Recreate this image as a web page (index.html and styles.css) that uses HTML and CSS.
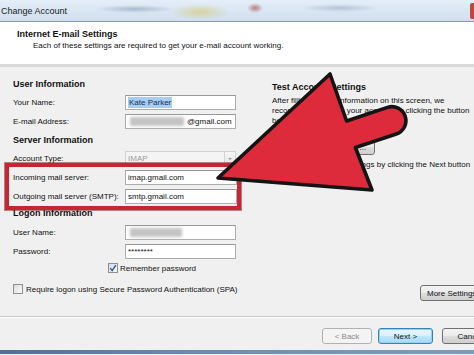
FILE: index.html
```html
<!DOCTYPE html>
<html lang="en">
<head>
	<meta charset="UTF-8">
	<title>Change Account</title>
	<link rel="stylesheet" href="styles.css">
</head>
<body>
	<div class="window">
		<div class="titlebar">
			<span class="title">Change Account</span>
			<span class="close"></span>
		</div>
		<div class="header">
			<div class="header-title">Internet E-mail Settings</div>
			<div class="header-sub">Each of these settings are required to get your e-mail account working.</div>
		</div>
		<div class="main">
			<div class="left">
				<div class="group-title">User Information</div>
				<div class="row">
					<span class="label">Your Name:</span>
					<span class="field"><span class="selected">Kate Parker</span></span>
				</div>
				<div class="row">
					<span class="label">E-mail Address:</span>
					<span class="field"><span class="smudge"></span><span class="after-smudge">@gmail.com</span></span>
				</div>
				<div class="group-title">Server Information</div>
				<div class="row row-account">
					<span class="label">Account Type:</span>
					<span class="field field-disabled">IMAP<span class="drop"></span></span>
				</div>
				<div class="highlight">
					<div class="row">
						<span class="label">Incoming mail server:</span>
						<span class="field">imap.gmail.com</span>
					</div>
					<div class="row">
						<span class="label">Outgoing mail server (SMTP):</span>
						<span class="field">smtp.gmail.com</span>
					</div>
				</div>
				<div class="group-title group-logon">Logon Information</div>
				<div class="row row-user">
					<span class="label">User Name:</span>
					<span class="field"><span class="smudge smudge-user"></span></span>
				</div>
				<div class="row">
					<span class="label">Password:</span>
					<span class="field">********</span>
				</div>
				<div class="check-row check-remember">
					<span class="check checked">
						<svg width="8" height="8" viewBox="0 0 8 8"><path d="M1.2 4.2 L3.2 6.6 L6.8 1.2" fill="none" stroke="#2a4f8f" stroke-width="1.3"/></svg>
					</span>
					<span>Remember password</span>
				</div>
				<div class="check-row check-spa">
					<span class="check"></span>
					<span>Require logon using Secure Password Authentication (SPA)</span>
				</div>
			</div>
			<div class="right">
				<div class="group-title group-test">Test Account Settings</div>
				<p class="info">After filling out the information on this screen, we<br>recommend you test your account by clicking the button<br>below. (Requires network connection)</p>
				<span class="btn btn-test">Test Account Settings ...</span>
				<div class="check-row check-next">
					<span class="check checked">
						<svg width="8" height="8" viewBox="0 0 8 8"><path d="M1.2 4.2 L3.2 6.6 L6.8 1.2" fill="none" stroke="#2a4f8f" stroke-width="1.3"/></svg>
					</span>
					<span>Test Account Settings by clicking the Next button</span>
				</div>
				<span class="btn btn-more">More Settings ...</span>
			</div>
		</div>
		<div class="footer">
			<span class="btn btn-disabled btn-back">&lt; Back</span>
			<span class="btn btn-default btn-next">Next &gt;</span>
			<span class="btn btn-cancel">Cancel</span>
		</div>
		<div class="taskbar"></div>
		<svg class="arrow" width="474" height="355" viewBox="0 0 474 355">
			<path d="M218 178 L330 74 L346.6 121 L387.5 107.4 A14 14 0 0 1 396.3 134 L355.4 147.5 L372 190 Z" fill="#de2b3b" stroke="#141414" stroke-width="3.6" stroke-linejoin="round"/>
		</svg>
	</div>
</body>
</html>
```

FILE: styles.css
```css
body{
	margin: 0;
	overflow: hidden;
}
.window{
	width: 474px;
	height: 355px;
	position: relative;
	overflow: hidden;
	background: #f0f0f0;
	font-family: "Liberation Sans", Arial, sans-serif;
	font-size: 8px;
	color: #111;
}
.titlebar{
	height: 21px;
	display: flex;
	align-items: center;
	justify-content: space-between;
	border-bottom: 1px solid #8c9aa8;
	background:
		radial-gradient(ellipse 30px 8px at 200px 12px, rgba(214,206,140,0.8), transparent),
		radial-gradient(ellipse 8px 5px at 255px 8px, rgba(170,80,70,0.7), transparent),
		radial-gradient(ellipse 40px 4px at 135px 9px, rgba(120,140,170,0.5), transparent),
		radial-gradient(ellipse 40px 4px at 340px 8px, rgba(120,140,170,0.4), transparent),
		linear-gradient(#e4eef8, #cfdeee);
}
.title{
	font-size: 9px;
	padding-left: 1px;
	color: #1a1a1a;
}
.close{
	width: 4px;
	height: 16px;
	background: #c0483a;
	border-radius: 2px 0 0 2px;
}
.header{
	background: #fff;
	border-bottom: 3px solid #dadada;
	padding-top: 6px;
	box-sizing: content-box;
	height: 36px;
}
.header-title{
	font-weight: bold;
	font-size: 9px;
	line-height: 12px;
	padding-left: 17px;
}
.header-sub{
	line-height: 10px;
	margin-top: 1px;
	padding-left: 33px;
}
.main{
	height: 249px;
	display: flex;
	border-bottom: 1px solid #c8c8c8;
}
.left{
	width: 229px;
	padding-left: 13px;
	flex: none;
}
.group-title{
	font-weight: bold;
	font-size: 9px;
	line-height: 12px;
	margin-top: 3px;
}
.left .group-title:first-child{
	margin-top: 11px;
}
.row{
	height: 19px;
	display: flex;
	align-items: center;
}
.group-title + .row{
	margin-top: 3px;
}
.label{
	width: 112px;
	flex: none;
}
.field{
	width: 111px;
	height: 15px;
	box-sizing: border-box;
	border: 1px solid #abadb3;
	border-top-color: #999;
	background: #fff;
	display: flex;
	align-items: center;
	padding-left: 2px;
	white-space: nowrap;
	overflow: hidden;
}
.selected{
	background: #a9cdf0;
	color: #10305a;
	padding: 1px;
}
.smudge{
	width: 54px;
	height: 9px;
	margin-left: 2px;
	background: #c4c4c4;
	filter: blur(1.5px);
	flex: none;
}
.smudge-user{
	width: 52px;
}
.after-smudge{
	margin-left: 3px;
}
.field-disabled{
	background: #f4f4f4;
	border-color: #d2d2d2;
	color: #9a9a9a;
	justify-content: space-between;
}
.drop{
	width: 10px;
	height: 13px;
	border-left: 1px solid #d2d2d2;
	background: linear-gradient(#f6f6f6, #e6e6e6);
	display: flex;
	align-items: center;
	justify-content: center;
}
.drop::after{
	content: "";
	border-left: 2px solid transparent;
	border-right: 2px solid transparent;
	border-top: 2px solid #a0a0a0;
}
.row-account{
	margin-top: 3px;
}
.highlight{
	position: relative;
	z-index: 1;
	width: 236px;
	box-sizing: border-box;
	margin: -5px 0 0 -8px;
	border: 4px solid #c72532;
	padding: 1px 0 0 4px;
	box-shadow: 0 0 0 1px rgba(110,20,25,0.5);
}
.highlight .field{
	width: 112px;
}
.group-logon{
	margin-top: -3px;
}
.group-logon + .row{
	margin-top: 4px;
}
.check-row{
	display: flex;
	align-items: center;
	height: 12px;
	white-space: nowrap;
}
.check{
	width: 10px;
	height: 10px;
	box-sizing: border-box;
	border: 1px solid #8e8f8f;
	background: linear-gradient(135deg, #dcdcdc, #fbfbfb);
	display: flex;
	align-items: center;
	justify-content: center;
	margin-right: 2px;
	flex: none;
}
.checked{
	background: linear-gradient(135deg, #cfdcec, #f4f8fc);
}
.check-remember{
	margin-top: 1px;
	padding-left: 95px;
}
.check-spa{
	margin-top: 9px;
}
.check-spa .check{
	margin-right: 3px;
}
.right{
	flex: 1;
	padding-left: 30px;
	display: flex;
	flex-direction: column;
	align-items: flex-start;
	white-space: nowrap;
}
.group-test{
	margin-top: 14px;
}
.info{
	margin: 3px 0 0;
	line-height: 10px;
}
.btn{
	height: 16px;
	box-sizing: border-box;
	border: 1px solid #707070;
	border-radius: 3px;
	background: linear-gradient(#f3f3f3 0%, #ebebeb 48%, #dddddd 52%, #cfcfcf 100%);
	display: flex;
	align-items: center;
	justify-content: center;
	white-space: nowrap;
	flex: none;
}
.btn-test{
	width: 103px;
	margin-top: 13px;
}
.check-next{
	margin-top: 3px;
	padding-left: 14px;
}
.btn-more{
	width: 70px;
	margin: auto 0 15px 148px;
	justify-content: flex-start;
	padding-left: 6px;
}
.footer{
	height: 33px;
	border-top: 1px solid #fff;
	box-sizing: border-box;
	display: flex;
	padding: 10px 0 0 322px;
}
.btn-back{
	width: 50px;
}
.btn-disabled{
	border-color: #adb2b5;
	background: #f4f4f4;
	color: #8a8a8a;
}
.btn-next{
	width: 55px;
	margin-left: 6px;
}
.btn-default{
	border-color: #3c7fb1;
	background: linear-gradient(#eaf6fd 0%, #d9f0fc 48%, #bee6fd 52%, #a7d9f5 100%);
	box-shadow: inset 0 0 0 1px #8fd3f5;
}
.btn-cancel{
	width: 56px;
	margin-left: 9px;
}
.taskbar{
	height: 4px;
	background: linear-gradient(90deg, #50708f, #6d8cab 40%, #7f9dbb);
}
.arrow{
	position: absolute;
	top: 0;
	left: 0;
	z-index: 2;
}
```
